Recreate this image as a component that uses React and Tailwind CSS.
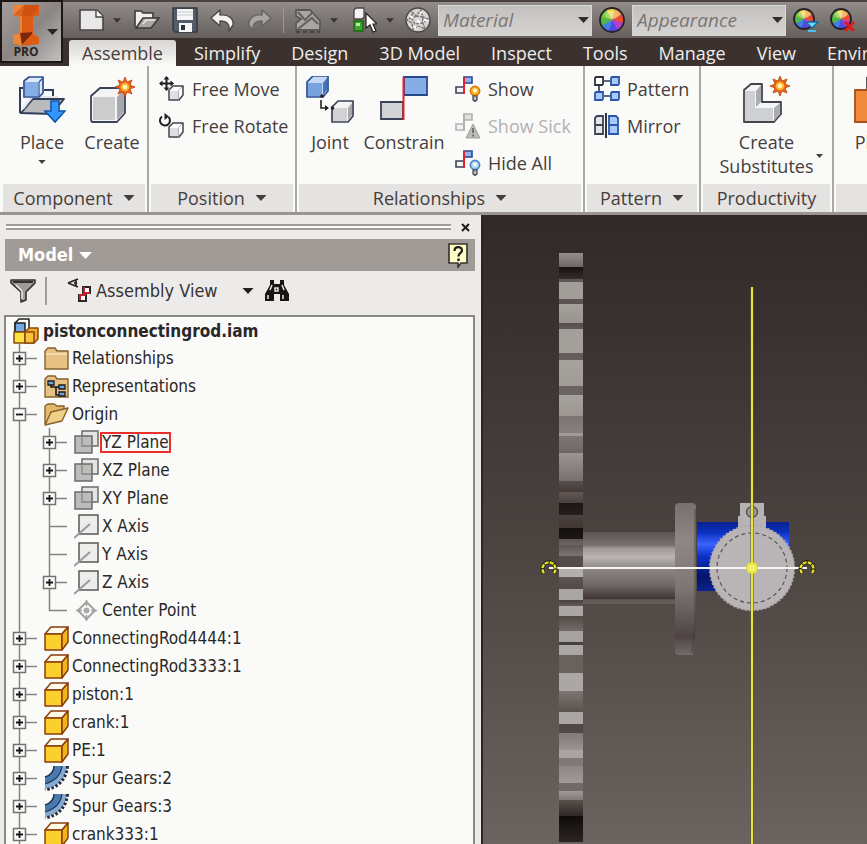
import { useState } from "react";

const TABS = ["Assemble", "Simplify", "Design", "3D Model", "Inspect", "Tools", "Manage", "View", "Environments"];

const TREE = [
    { id: "rel", label: "Relationships", icon: "folder", expandable: true },
    { id: "rep", label: "Representations", icon: "views", expandable: true },
    {
        id: "origin",
        label: "Origin",
        icon: "open",
        expandable: true,
        children: [
            { id: "yz", label: "YZ Plane", icon: "plane", expandable: true },
            { id: "xz", label: "XZ Plane", icon: "plane", expandable: true },
            { id: "xy", label: "XY Plane", icon: "plane", expandable: true },
            { id: "x", label: "X Axis", icon: "axis" },
            { id: "y", label: "Y Axis", icon: "axis" },
            { id: "z", label: "Z Axis", icon: "axis", expandable: true },
            { id: "center", label: "Center Point", icon: "point" },
        ],
    },
    { id: "rod4", label: "ConnectingRod4444:1", icon: "part", expandable: true },
    { id: "rod3", label: "ConnectingRod3333:1", icon: "part", expandable: true },
    { id: "piston", label: "piston:1", icon: "part", expandable: true },
    { id: "crank", label: "crank:1", icon: "part", expandable: true },
    { id: "pe", label: "PE:1", icon: "part", expandable: true },
    { id: "gear2", label: "Spur Gears:2", icon: "gear", expandable: true },
    { id: "gear3", label: "Spur Gears:3", icon: "gear", expandable: true },
    { id: "crank333", label: "crank333:1", icon: "part", expandable: true },
];

// [top, bottom, colour at the top, colour at the bottom]
const GEAR_BANDS = [
    [253, 267, "#958d8b", "#6f6765"],
    [267, 279, "#15100f", "#352e2c"],
    [279, 282, "#5f5856", "#5f5856"],
    [282, 299, "#a19d99", "#a19d99"],
    [299, 304, "#5c5553", "#5c5553"],
    [304, 323, "#a5a19d", "#98938f"],
    [323, 329, "#544d4b", "#605957"],
    [329, 353, "#a39f9b", "#a39f9b"],
    [353, 360, "#645d5b", "#645d5b"],
    [360, 386, "#a5a19d", "#a19c98"],
    [386, 395, "#6a6361", "#6a6361"],
    [395, 416, "#a5a19d", "#9c9793"],
    [416, 433, "#7a7371", "#87807e"],
    [433, 436, "#a19c99", "#a19c99"],
    [436, 453, "#7d7674", "#6e6765"],
    [453, 481, "#9c9593", "#77706e"],
    [481, 492, "#564d4a", "#443b39"],
    [492, 503, "#615856", "#4b423f"],
    [503, 515, "#1b1513", "#251e1c"],
    [515, 528, "#4b423f", "#403735"],
    [528, 539, "#14100e", "#1c1715"],
    [539, 545, "#5d5654", "#6b6462"],
    [545, 556, "#5c5553", "#7c7573"],
    [556, 569, "#564e4b", "#514946"],
    [569, 577, "#b2afac", "#b2afac"],
    [577, 589, "#5c5552", "#524a47"],
    [589, 600, "#a9a6a3", "#a9a6a3"],
    [600, 606, "#48413e", "#625a57"],
    [606, 616, "#aaa7a4", "#aaa7a4"],
    [616, 631, "#524a47", "#726b68"],
    [631, 642, "#a5a29f", "#a5a29f"],
    [642, 645, "#45403d", "#45403d"],
    [645, 655, "#aaa7a4", "#aaa7a4"],
    [655, 673, "#68615e", "#68615e"],
    [673, 691, "#aaa7a4", "#aaa7a4"],
    [691, 712, "#7d7673", "#58514e"],
    [712, 724, "#a9a6a3", "#a9a6a3"],
    [724, 733, "#4f4845", "#504946"],
    [733, 750, "#807977", "#9b9492"],
    [750, 758, "#aaa5a2", "#aaa5a2"],
    [758, 766, "#7f7876", "#7f7876"],
    [766, 783, "#8e8785", "#a09997"],
    [783, 791, "#716a68", "#716a68"],
    [791, 800, "#a09997", "#7f7876"],
    [800, 816, "#57504d", "#2e2725"],
    [816, 842, "#0e0b0a", "#2b2523"],
];

const Arrow = ({ className = "h-[6px] w-[11px]" }) => (
    <svg className={className} viewBox="0 0 11 6" aria-hidden="true">
        <path d="M0 0h11L5.5 6z" fill="currentColor" />
    </svg>
);

const Burst = ({ x, y }) => (
    <g transform={`translate(${x} ${y})`}>
        <path
            d="M0-10 2-5 7-7 5-2 10 0 5 2 7 7 2 5 0 10-2 5-7 7-5 2-10 0-5-2-7-7-2-5z"
            fill="#e8641b"
            stroke="#b9460c"
            strokeWidth=".8"
        />
        <circle r="4.3" fill="#ffb733" />
        <circle r="2.3" fill="#fff6b8" />
    </g>
);

const SmallCube = ({ x = 0, y = 0 }) => (
    <g transform={`translate(${x} ${y})`} stroke="#3e424c" strokeWidth="1.5" strokeLinejoin="round">
        <path d="M1 5 5 1h10v9l-4 5H1z" fill="#fff" />
        <path d="M2 6h8v8H2z" fill="#dedfe2" stroke="none" />
        <path d="M10.500 5.500v9M10.500 5.500 14 2" stroke="#aeb1b8" strokeWidth="1" />
    </g>
);

/* ---------- quick access icons ---------- */

const Wheel = ({ r = 11, cx = 13, cy = 13 }) => {
    const colors = ["#f39a3c", "#ee4a33", "#b13fd0", "#5148e8", "#3f80ea", "#4fb84a", "#7acb3b", "#f0d83f"];
    return (
        <g transform={`translate(${cx} ${cy})`}>
            {colors.map((color, i) => {
                const a = ((i * 45 - 75) * Math.PI) / 180;
                const b = ((i * 45 - 30) * Math.PI) / 180;
                const d = `M0 0 ${r * Math.cos(a)} ${r * Math.sin(a)}A${r} ${r} 0 0 1 ${r * Math.cos(b)} ${r * Math.sin(b)}z`;
                return <path key={color} d={d} fill={color} />;
            })}
            <circle r={r} fill="none" stroke="#26222c" strokeWidth="1.8" />
            <ellipse cy={-r * 0.45} rx={r * 0.6} ry={r * 0.35} fill="#fff" opacity=".3" />
        </g>
    );
};

const quickIcons = {
    new: (
        <>
            <path d="M2 3h17l6 6v14H2z" fill="#e9e8e8" stroke="#494544" strokeWidth="1.6" />
            <path d="M18 3v7h7" fill="#fff" stroke="#494544" strokeWidth="1.4" />
        </>
    ),
    folder: (
        <>
            <path d="M1 20V4h6l2 2h10v5" fill="#efefef" stroke="#3d3a39" strokeWidth="1.6" />
            <path d="M2 21 9 11h16l-8 10z" fill="#a9a8a7" stroke="#3d3a39" strokeWidth="1.6" />
            <path d="m9 17 3-4h9" fill="none" stroke="#e8e8e8" strokeWidth="1.6" />
        </>
    ),
    save: (
        <>
            <path d="M1 1h24v24H3l-2-2z" fill="#555c69" stroke="#343944" strokeWidth="1.5" />
            <path d="M5 2h16v11H5z" fill="#f6f6f6" />
            <path d="M5 5h16M5 8h16" stroke="#c9cbd0" />
            <path d="M7 16h13v9H7z" fill="#f6f6f6" />
            <path d="M9 18h4v5H9z" fill="#30343d" />
        </>
    ),
    undo: (
        <path
            d="m1 11 9-8v5c9-1 14 4 13 10l-4 6c1-7-2-10-9-10v5z"
            fill="#f3f3f3"
            stroke="#4c4846"
            strokeWidth="1.4"
            strokeLinejoin="round"
        />
    ),
    redo: (
        <path
            d="m23 11-9-8v5C5 7 0 12 1 18l4 6c-1-7 2-10 9-10v5z"
            fill="#a9a6a4"
            stroke="#686461"
            strokeWidth="1.4"
            strokeLinejoin="round"
        />
    ),
    update: (
        <>
            <path d="M1 3h14l10 11v9H1v-7l5-4-5-3z" fill="#aaa6a3" stroke="#5d5856" strokeWidth="1.8" />
            <path d="m3 5 7 8 7-7M3 22 17 11l6 6" fill="none" stroke="#66615f" strokeWidth="2.2" />
            <path d="M1 25h24" stroke="#4a4543" strokeWidth="2" strokeDasharray="4 3" />
        </>
    ),
    select: (
        <>
            <path d="M3 3 5 1h8v9l-2 2H3z" fill="#f3f3f3" stroke="#484544" strokeWidth="1.3" />
            <path d="M3 14h9v10H3z" fill="#39a62a" stroke="#1c6812" strokeWidth="1.5" />
            <path d="M5 16h4v3H5z" fill="#b9edaa" />
            <path d="M15 6v15l4-3 3 7 3-1-3-7h4z" fill="#fff" stroke="#25211f" strokeWidth="1.2" />
        </>
    ),
    sphere: (
        <>
            <circle cx="13" cy="13" r="12" fill="#d6d5d5" stroke="#4a4644" strokeWidth="1.4" />
            <path
                d="m7 5 4 4 5-6 2 7 5 2-5 4 2 6-7-3-5 4-1-7-5-3 5-3zM11 9l7 1-1 6-7 1-3-5z"
                fill="none"
                stroke="#77716f"
                strokeWidth="1.3"
                strokeDasharray="3 1"
            />
            <path d="m5 9 3 2m7-5 3-1m-6 8 3 3m4-3 4 1M9 19l2 3" stroke="#fff" strokeWidth="1.8" />
        </>
    ),
    wheel: <Wheel r={12} />,
    wheelAdjust: (
        <>
            <Wheel r={10} cx={11} cy={12} />
            <path d="M13 15h12l-6 6z" fill="#6ed5ff" stroke="#106f9e" strokeWidth="1.3" />
            <path d="M15 24h8" stroke="#45bff0" strokeWidth="2" />
        </>
    ),
    wheelClear: (
        <>
            <Wheel r={10} cx={11} cy={12} />
            <path d="m15 15 9 9m0-9-9 9" stroke="#d81c17" strokeWidth="3" />
        </>
    ),
};

const QuickButton = ({ name, label, className = "" }) => (
    <button aria-label={label} className={`shrink-0 ${className}`}>
        <svg className="size-[26px]" viewBox="0 0 26 26">
            {quickIcons[name]}
        </svg>
    </button>
);

const ArrowButton = ({ label }) => (
    <button aria-label={label} className="-ml-1 flex w-[10px] shrink-0 justify-center text-[#3a3431]">
        <Arrow className="h-[5px] w-[8px]" />
    </button>
);

const StyleSelect = ({ label }) => (
    <div className="relative h-[31px] w-[154px] shrink-0">
        <select
            aria-label={label}
            className="h-full w-full appearance-none border border-[#dad8d6] bg-linear-to-b from-[#c3c1bf] to-[#d6d4d2] pl-1 text-[19px] leading-6 text-[#7b7674] italic"
        >
            <option>{label}</option>
        </select>
        <span className="pointer-events-none absolute top-[12px] right-[3px] text-[#322c2a]">
            <Arrow />
        </span>
    </div>
);

const TitleBar = () => (
    <div className="flex h-[38px] items-center overflow-hidden border-t-2 border-[#4a4340] bg-linear-to-b from-[#928c8a] to-[#655f5c] pl-[15px]">
        <div className="flex shrink-0 items-center gap-3">
            <QuickButton name="new" label="New" />
            <ArrowButton label="New options" />
            <QuickButton name="folder" label="Open" />
            <QuickButton name="save" label="Save" />
            <QuickButton name="undo" label="Undo" />
            <QuickButton name="redo" label="Redo" />
        </div>
        <div className="ml-[9px] flex shrink-0 items-center gap-3 border-l border-[#9d9896] pl-[11px]">
            <QuickButton name="update" label="Update" />
            <ArrowButton label="Update options" />
            <QuickButton name="select" label="Select" />
            <ArrowButton label="Select options" />
        </div>
        <div className="ml-[10px] flex shrink-0 items-center gap-[7px]">
            <QuickButton name="sphere" label="Material browser" />
            <StyleSelect label="Material" />
            <QuickButton name="wheel" label="Appearance browser" />
            <StyleSelect label="Appearance" />
            <QuickButton name="wheelAdjust" label="Adjust appearance" />
            <QuickButton name="wheelClear" label="Clear appearance" className="ml-1" />
        </div>
    </div>
);

const AppButton = () => (
    <button
        aria-label="Application menu"
        className="flex h-[63px] w-[63px] shrink-0 items-center justify-between border-2 border-[#1c1715] bg-linear-to-br from-[#a29d9a] via-[#8b8683] to-[#c2bfbc] pr-[3px] pl-[10px] text-[#2b2523]"
    >
        <span className="flex flex-col items-center">
            <svg className="h-[41px] w-[28px]" viewBox="0 0 28 41" aria-hidden="true">
                <path d="M1 0h26v10l-6 2v17l6 3v7l-17 2-9-3v-8l7-2V12l-7-2z" fill="#dc5c15" />
                <path d="M1 0h11l-2 12v16l10-1v2L10 41l-9-3v-8l7-2V12l-7-2z" fill="#f08434" />
                <path d="M1 10 12 0h15l-7 11H8z" fill="#c9480c" opacity=".55" />
                <path d="m8 28 12-1v2l-10 11z" fill="#7e2606" />
            </svg>
            <span className="text-[12px] leading-3 font-bold">PRO</span>
        </span>
        <Arrow className="h-[6px] w-[11px]" />
    </button>
);

/* ---------- ribbon icons ---------- */

const PlaceIcon = () => (
    <svg className="h-[48px] w-[48px]" viewBox="0 0 48 48" aria-hidden="true">
        <path d="M1 35V11h32v5" fill="#f6f7f9" />
        <path d="M2 37V12h3M26 14h9v7M2 37h28" fill="none" stroke="#2f3d5b" strokeWidth="2" />
        <path d="M3 37 15 23h31L34 38z" fill="#b9babd" stroke="#2f3d5b" strokeWidth="1.8" strokeLinejoin="round" />
        <path d="m5 33 9-12h26" fill="none" stroke="#dfe3ea" strokeWidth="2" />
        <path d="m6 5 5-4h14v16l-4 4H6z" fill="#dbe9fb" stroke="#2b4f94" strokeWidth="1.7" strokeLinejoin="round" />
        <path d="M7 6h13v14H7z" fill="#85aee8" />
        <path d="M21 6v14M21 6l4-4" stroke="#2b4f94" strokeWidth="1.2" />
        <path d="M33 25h8v10h6L37 46 27 35h6z" fill="#3296ff" stroke="#1455a8" strokeWidth="1.6" />
    </svg>
);

const CreateIcon = () => (
    <svg className="h-[48px] w-[48px]" viewBox="0 0 48 48" aria-hidden="true">
        <path
            d="m3 20 9-8h25v25l-8 9H4l-1-2z"
            fill="#f5f5f6"
            stroke="#3a4257"
            strokeWidth="1.8"
            strokeLinejoin="round"
        />
        <path d="M5 21h22v23H5z" fill="#cccccd" />
        <path d="M29 21v23l7-8V14z" fill="#a7a8ab" />
        <Burst x={37} y={11} />
    </svg>
);

const JointIcon = () => (
    <svg className="h-[48px] w-[48px]" viewBox="0 0 48 48" aria-hidden="true">
        <path d="m1 6 6-6h15v15l-5 6H1z" fill="#c4d9f6" stroke="#2b4f94" strokeWidth="1.7" strokeLinejoin="round" />
        <path d="M2 7h14v13H2z" fill="#78a3e0" />
        <path d="m17 7 4-5v12l-4 5z" fill="#4673b8" />
        <circle cx="16" cy="20" r="1.800" fill="#222" />
        <path d="M15 24v8h6" fill="none" stroke="#222" strokeWidth="1.6" />
        <path d="m19 29 4 3-4 3z" fill="#222" />
        <path
            d="m26 31 6-6h15v15l-5 6H26z"
            fill="#f4f4f5"
            stroke="#3a4257"
            strokeWidth="1.7"
            strokeLinejoin="round"
        />
        <path d="M27 32h14v13H27z" fill="#d2d2d4" />
        <path d="m42 32 4-5v12l-4 5z" fill="#a7a8ab" />
        <circle cx="26.500" cy="32" r="1.800" fill="#222" />
    </svg>
);

const ConstrainIcon = () => (
    <svg className="h-[48px] w-[48px]" viewBox="0 0 48 48" aria-hidden="true">
        <path d="M24 1h23v18H24z" fill="#86aee6" stroke="#29478c" strokeWidth="1.8" />
        <path d="M1 26h22v17H1z" fill="#d2d3d5" stroke="#3a4257" strokeWidth="1.8" />
        <path d="M23.500 1v43" stroke="#e4212c" strokeWidth="2" />
    </svg>
);

const SubstituteIcon = () => (
    <svg className="h-[48px] w-[48px]" viewBox="0 0 48 48" aria-hidden="true">
        <path
            d="m1 14 7-6h11v18h19v12l-7 8H1z"
            fill="#f4f5f7"
            stroke="#43464d"
            strokeWidth="1.8"
            strokeLinejoin="round"
        />
        <path d="M2 15h10v17h18v13H2z" fill="#cfd0d4" />
        <path d="m13 15 5-6v17l-5 5z" fill="#aaacb2" />
        <path d="m31 32 6-5v11l-6 7z" fill="#aaacb2" />
        <Burst x={37} y={10} />
    </svg>
);

const FreeMoveIcon = () => (
    <svg className="size-[26px]" viewBox="0 0 26 26" aria-hidden="true">
        <path d="M7.500 1v13M1 7.500h13" stroke="#222" strokeWidth="2" />
        <path d="m7.500 0 3 3.500h-6zM7.500 15l3-3.500h-6zM0 7.500l3.500-3v6zM15 7.500l-3.500-3v6z" fill="#222" />
        <SmallCube x={9} y={9} />
    </svg>
);

const FreeRotateIcon = () => (
    <svg className="size-[26px]" viewBox="0 0 26 26" aria-hidden="true">
        <path d="M3 3.500A5 5 0 1 0 9.500 4" fill="none" stroke="#222" strokeWidth="2" />
        <path d="M5.500 0v7l4.500-3.500z" fill="#222" />
        <SmallCube x={9} y={9} />
    </svg>
);

const ShowIcon = ({ kind }) => {
    const sick = kind === "sick";
    const bulb = kind === "show" ? "#ffb52e" : "#a8d5ff";
    const bulbEdge = kind === "show" ? "#d67a00" : "#4983c4";
    return (
        <svg className="size-[26px]" viewBox="0 0 26 26" aria-hidden="true">
            <path d="M9 1h8v6H9z" fill={sick ? "#e1e0df" : "#8cb4ef"} stroke={sick ? "#b5b3b1" : "#29478c"} strokeWidth="1.6" />
            <path d="M1 11h8v6H1z" fill="#f2f2f2" stroke={sick ? "#b5b3b1" : "#3a4257"} strokeWidth="1.6" />
            <path d="M9 1v17" stroke={sick ? "#b5b3b1" : "#e4212c"} strokeWidth="2" />
            {sick ? (
                <>
                    <path d="m18 11 7 14H11z" fill="#bdbbb9" stroke="#a3a19f" strokeLinejoin="round" />
                    <path d="M18 15v5m0 1.500v2" stroke="#77736f" strokeWidth="2" />
                </>
            ) : (
                <>
                    <circle cx="20" cy="15" r="4.600" fill={bulb} stroke={bulbEdge} strokeWidth="1.6" />
                    <circle cx="20" cy="14.500" r="2" fill="#fffbe0" />
                    <path d="M18 20h4v4l-2 1.500-2-1.500z" fill="#b9bcc4" stroke="#3a3d46" strokeWidth="1.2" />
                </>
            )}
        </svg>
    );
};

const PatternIcon = () => (
    <svg className="size-[26px]" viewBox="0 0 26 26" aria-hidden="true">
        <path d="M10 5h6M5 10v6M10 20h6" stroke="#29384f" strokeWidth="1.6" />
        <path d="m1 2 1-1h7v7L8 9H1z" fill="#fff" stroke="#2d3340" strokeWidth="1.8" />
        <path d="m17 2 1-1h7v7l-1 1h-7zM1 17l1-1h7v7l-1 1H1zM17 17l1-1h7v7l-1 1h-7z" fill="#a9c9f8" stroke="#2b55ac" strokeWidth="1.8" />
    </svg>
);

const MirrorIcon = () => (
    <svg className="size-[26px]" viewBox="0 0 26 26" aria-hidden="true">
        <path d="m1 5 2-2h6v9H1zM1 12h8v9H1z" fill="#e5e6e8" stroke="#3a4257" strokeWidth="1.8" />
        <path d="M15 3h7l2 2v7h-9zM15 12h9v9h-9z" fill="#a9c9f8" stroke="#2b55ac" strokeWidth="1.8" />
        <path d="M12 0v25" stroke="#2d3340" strokeWidth="2" />
    </svg>
);

/* ---------- ribbon ---------- */

const Panel = ({ title, arrow, className, children }) => (
    <section className={`flex shrink-0 flex-col border-r-2 border-[#aca8a5] ${className}`}>
        <div className="flex h-[118px]">{children}</div>
        <h2 className="mx-[2px] flex h-[28px] items-center justify-center gap-[10px] bg-[#e5e3e1] text-[18px] leading-6 text-[#453e3c]">
            {title}
            {arrow && <Arrow className="h-[6px] w-[12px]" />}
        </h2>
    </section>
);

const BigButton = ({ icon, label, className, children }) => (
    <button className={`flex flex-col items-center gap-[6px] pt-[10px] text-[18px] leading-6 ${className}`}>
        {icon}
        <span>{label}</span>
        {children}
    </button>
);

const SmallButton = ({ icon, label, disabled }) => (
    <button disabled={disabled} className="flex h-[37px] items-center gap-[7px] text-[18px] leading-6 disabled:text-[#b3b0ae]">
        {icon}
        {label}
    </button>
);

const Ribbon = () => (
    <div className="flex shrink-0 overflow-hidden border-b-3 border-[#9a9592] bg-[#fafaf9] text-[#453e3c]">
        <Panel title="Component" arrow className="w-[149px] pl-px">
            <BigButton icon={<PlaceIcon />} label="Place" className="ml-[6px] w-[70px]">
                <Arrow className="h-[4px] w-[8px]" />
            </BigButton>
            <BigButton icon={<CreateIcon />} label="Create" className="w-[70px]" />
        </Panel>
        <Panel title="Position" arrow className="w-[148px]">
            <div className="pt-1 pl-[10px]">
                <SmallButton icon={<FreeMoveIcon />} label="Free Move" />
                <SmallButton icon={<FreeRotateIcon />} label="Free Rotate" />
            </div>
        </Panel>
        <Panel title="Relationships" arrow className="w-[288px]">
            <BigButton icon={<JointIcon />} label="Joint" className="w-[66px]" />
            <BigButton icon={<ConstrainIcon />} label="Constrain" className="w-[82px]" />
            <div className="pt-1 pl-[10px]">
                <SmallButton icon={<ShowIcon kind="show" />} label="Show" />
                <SmallButton icon={<ShowIcon kind="sick" />} label="Show Sick" disabled />
                <SmallButton icon={<ShowIcon kind="hide" />} label="Hide All" />
            </div>
        </Panel>
        <Panel title="Pattern" arrow className="w-[116px]">
            <div className="pt-1 pl-[9px]">
                <SmallButton icon={<PatternIcon />} label="Pattern" />
                <SmallButton icon={<MirrorIcon />} label="Mirror" />
            </div>
        </Panel>
        <Panel title="Productivity" className="w-[133px]">
            <button className="relative flex w-full flex-col items-center gap-[6px] pt-[10px] text-[18px] leading-6">
                <SubstituteIcon />
                <span>
                    Create
                    <br />
                    Substitutes
                </span>
                <span className="absolute right-[9px] bottom-[26px]">
                    <Arrow className="h-[4px] w-[7px]" />
                </span>
            </button>
        </Panel>
        <Panel title="" className="w-[150px]">
            <BigButton
                label="Plane"
                className="ml-[14px] w-[60px]"
                icon={
                    <svg className="h-[48px] w-[48px]" viewBox="0 0 48 48" aria-hidden="true">
                        <path d="M13 1v12" stroke="#555" strokeWidth="2" />
                        <path d="M1 14h44v32H1z" fill="#f28a3c" stroke="#a8501b" strokeWidth="1.8" />
                    </svg>
                }
            />
        </Panel>
    </div>
);

/* ---------- model browser ---------- */

const treeIcons = {
    folder: (
        <>
            <path d="M1 5 4 2h7l2 3h11v18H1z" fill="#e6c184" stroke="#86612e" strokeWidth="1.4" />
            <path d="M2 8h21" stroke="#f7e2b8" strokeWidth="1.5" />
        </>
    ),
    views: (
        <>
            <path d="M1 5 4 2h7l2 3h11v18H1z" fill="#e6c184" stroke="#86612e" strokeWidth="1.4" />
            <path d="M7 10v3h5v8h4M12 13h4" fill="none" stroke="#1b1b1b" strokeWidth="1.6" />
            <path d="M4 7h6v4H4zM15 11h6v4h-6zM15 18h6v4h-6z" fill="#6fa6dc" stroke="#1b1b1b" strokeWidth="1.3" />
        </>
    ),
    open: (
        <>
            <path d="M1 22V4l3-2h6l3 2h7v5" fill="#e3b969" stroke="#86612e" strokeWidth="1.4" />
            <path d="m1 23 6-13 17-4-6 13z" fill="#f0cf86" stroke="#86612e" strokeWidth="1.4" strokeLinejoin="round" />
        </>
    ),
    plane: (
        <>
            <path d="M8 1h16v15H8z" fill="#e4e4e3" stroke="#6c6a69" strokeWidth="1.5" />
            <path d="M1 6h17v17H1z" fill="#bdbcbb" stroke="#6c6a69" strokeWidth="1.5" />
            <path d="M8 6v10h10" fill="none" stroke="#878584" strokeWidth="1.3" />
        </>
    ),
    axis: (
        <>
            <path d="M5 1h19v19H5z" fill="#ededec" stroke="#5a5857" strokeWidth="1.5" />
            <path d="m0 24 16-14" stroke="#9b9998" strokeWidth="2" />
        </>
    ),
    point: (
        <g fill="none" stroke="#a3a19f">
            <path d="M12.500 4 21 12.500 12.500 21 4 12.500z" strokeWidth="2" />
            <path d="M12.500 2v6m0 9v6M2 12.500h6m9 0h6" strokeWidth="1.5" />
            <circle cx="12.500" cy="12.500" r="2.500" fill="#aeacab" />
        </g>
    ),
    part: (
        <g stroke="#8a3d0c" strokeWidth="1.500" strokeLinejoin="round">
            <path d="m1 8 6-7h17l-6 7z" fill="#fffbe9" />
            <path d="M1 8h17v16H1z" fill="#fad02c" />
            <path d="m18 8 6-7v15l-6 8z" fill="#f1b51c" />
        </g>
    ),
    gear: (
        <>
            <path d="M10 0h13C22 12 14 21 1 23V11C7 9 10 5 10 0z" fill="#86abd3" />
            <path d="M10 0h8C17 9 11 15 1 18v-7C7 9 10 5 10 0z" fill="#477ab2" />
            <path d="M10 0C10 5 7 9 1 11" fill="none" stroke="#22334a" strokeWidth="1.500" />
            <path d="M18 0C17 9 11 15 1 18" fill="none" stroke="#263b57" strokeWidth="1.300" />
            <path d="M23.500 0C22.500 13 14 22 1 24" fill="none" stroke="#262d38" strokeWidth="3" strokeDasharray="2.600 1.800" />
        </>
    ),
};

// The guide lines of one row, with its plus or minus box
const Branch = ({ node, open, last, onToggle }) => {
    const lines = (
        <svg className="h-[28px] w-[38px]" viewBox="0 0 38 28" aria-hidden="true">
            <path d={last ? "M13.500 0v14.500H31" : "M13.500 0v28M13.500 14.500H31"} fill="none" stroke="#858281" strokeWidth="1.500" />
            {node.expandable && (
                <>
                    <path d="M7.500 8.500h12v12h-12z" fill="#fafaf9" stroke="#757271" strokeWidth="1.500" />
                    <path d={open ? "M10 14.500h7" : "M10 14.500h7M13.500 11v7"} stroke="#161616" strokeWidth="1.800" />
                </>
            )}
        </svg>
    );
    if (!node.expandable) return lines;
    return (
        <button aria-label={`Toggle ${node.label}`} aria-expanded={open} onClick={onToggle}>
            {lines}
        </button>
    );
};

const TreeRow = ({ node, level = 0, last, open, onToggle, selected, onSelect }) => (
    <li className="flex h-[28px] items-center">
        {level > 0 && (
            <span className="flex h-full w-[30px] shrink-0">
                <svg className="h-[28px] w-[30px]" viewBox="0 0 30 28" aria-hidden="true">
                    <path d="M13.500 0v28" stroke="#858281" strokeWidth="1.500" />
                </svg>
            </span>
        )}
        <Branch node={node} open={open} last={last} onToggle={onToggle} />
        <svg className="size-[25px] shrink-0" viewBox="0 0 25 25" aria-hidden="true">
            {treeIcons[node.icon]}
        </svg>
        <button
            onClick={onSelect}
            className={`ml-px border-2 leading-[17px] whitespace-nowrap ${selected ? "border-[#e8312c]" : "border-transparent"}`}
        >
            {node.label}
        </button>
    </li>
);

const ModelTree = () => {
    const [expanded, setExpanded] = useState({ origin: true });
    const [selected, setSelected] = useState("yz");

    const toggle = (id) => setExpanded((prev) => ({ ...prev, [id]: !prev[id] }));

    const rows = TREE.flatMap((node) => {
        const kids = (expanded[node.id] && node.children) || [];
        return [
            { node, level: 0 },
            ...kids.map((kid, i) => ({ node: kid, level: 1, last: i === kids.length - 1 })),
        ];
    });

    return (
        <div className="ml-1 min-h-0 flex-1 overflow-hidden border-t-2 border-r-2 border-l-2 border-[#8b8784] bg-[#fafaf9] text-[17px] text-[#2a2727]">
            <div className="flex h-[27px] items-center gap-1 pl-[7px]">
                <svg className="size-[26px] shrink-0" viewBox="0 0 26 26" aria-hidden="true">
                    <g stroke="#1d1d1d" strokeWidth="1.500" strokeLinejoin="round">
                        <path d="m2 5 4-4h10v10l-3 3H2z" fill="#fff" />
                        <path d="M2 5h10v9H2z" fill="#77a9e2" />
                    </g>
                    <g stroke="#8a4a0c" strokeWidth="1.500" strokeLinejoin="round">
                        <path d="M1 14h11v11H1z" fill="#fbe23c" />
                        <path d="m12 14 4-4h9v11l-4 4h-9z" fill="#f4a72b" />
                        <path d="M12 14h9v11h-9z" fill="#f8c33a" />
                    </g>
                </svg>
                <span className="leading-5 font-bold">pistonconnectingrod.iam</span>
            </div>
            <ul>
                {rows.map(({ node, level, last }) => (
                    <TreeRow
                        key={node.id}
                        node={node}
                        level={level}
                        last={last}
                        open={!!expanded[node.id]}
                        onToggle={() => toggle(node.id)}
                        selected={selected === node.id}
                        onSelect={() => setSelected(node.id)}
                    />
                ))}
            </ul>
        </div>
    );
};

const ModelBrowser = () => (
    <aside className="flex w-[481px] shrink-0 flex-col bg-[#edebe9] pr-[6px] font-['DejaVu_Sans_Condensed','Noto_Sans',sans-serif]">
        <div className="flex h-[24px] items-center gap-[5px] pr-px pl-[6px]">
            <div className="h-[6px] flex-1 border-y-2 border-[#a19d9a] bg-white" />
            <button aria-label="Close" className="flex w-[18px] justify-center">
                <svg className="size-[9px]" viewBox="0 0 9 9">
                    <path d="m1 1 7 7m0-7L1 8" stroke="#1d1918" strokeWidth="2" />
                </svg>
            </button>
        </div>
        <div className="ml-[5px] flex h-[32px] items-center justify-between bg-[#a09b97] pr-[6px] pl-[13px] text-white">
            <button className="flex items-center gap-[6px] text-[18px] leading-6 font-bold">
                Model
                <Arrow className="h-[7px] w-[13px]" />
            </button>
            <button aria-label="Help">
                <svg className="h-[25px] w-[22px]" viewBox="0 0 22 25">
                    <path d="M2 1h18v19h-6l-3 4v-4H2z" fill="#fffbc4" stroke="#3b3733" strokeWidth="1.700" />
                    <path d="M7.500 8c0-5 7.500-5 7.500-.5C15 10 11.500 10 11.500 13.500" fill="none" stroke="#1d1b1a" strokeWidth="2.200" />
                    <path d="M11.500 15.500V18" stroke="#1d1b1a" strokeWidth="2.400" />
                </svg>
            </button>
        </div>
        <div className="flex h-[44px] items-center pb-1 pl-[10px]">
            <button aria-label="Filter">
                <svg className="size-[26px]" viewBox="0 0 26 26">
                    <path d="M1 2h24v3l-9 9v8l-5 2v-10L1 5z" fill="#9e9c9b" stroke="#34302e" strokeWidth="1.600" strokeLinejoin="round" />
                    <path d="M3 4h20" stroke="#35302e" strokeWidth="2" />
                    <path d="m6 7 6 6v8" fill="none" stroke="#e8e7e6" strokeWidth="1.600" />
                </svg>
            </button>
            <span className="ml-[9px] h-[28px] w-[2px] bg-[#a19d9a]" />
            <svg className="ml-[20px] size-[26px]" viewBox="0 0 26 26" aria-hidden="true">
                <path d="M1 5 11 1M1 5l10 4M9 2v6" fill="none" stroke="#25211f" strokeWidth="1.500" />
                <circle cx="8.500" cy="5" r="1.500" fill="#25211f" />
                <path d="M16 9h7v6h-7zM12 17h7v6h-7z" fill="#fff" stroke="#2c2725" strokeWidth="2" />
                <path d="M17 9v6h6M13 22v-5h6" fill="none" stroke="#c32031" strokeWidth="2" />
            </svg>
            <div className="relative ml-[3px]">
                <select aria-label="Browser view" className="w-[158px] appearance-none text-[18px] leading-6 text-[#383332]">
                    <option>Assembly View</option>
                </select>
                <span className="pointer-events-none absolute top-[9px] right-0 text-[#25211f]">
                    <Arrow className="h-[6px] w-[12px]" />
                </span>
            </div>
            <button aria-label="Find" className="ml-[10px]">
                <svg className="size-[26px]" viewBox="0 0 26 26">
                    <path d="M6 2h4v4h6V2h4v5l5 9v7h-9v-7h-6v7H1v-7l5-9z" fill="#181413" />
                    <path d="M4 17v4m4-14-2 5M19 17v4m-1-14 2 5M11 10h3v3h-3z" stroke="#e9e7e5" strokeWidth="1.500" fill="none" />
                </svg>
            </button>
        </div>
        <ModelTree />
    </aside>
);

/* ---------- 3D view ---------- */

const Grip = ({ x }) => (
    <g transform={`translate(${x} 568)`} fill="none">
        <path d="M-5 5A6.500 6.500 0 1 1 5 5" stroke="#221d0c" strokeWidth="4" />
        <path d="M-5 5A6.500 6.500 0 1 1 5 5" stroke="#e6e32c" strokeWidth="2.400" strokeDasharray="4 1" />
    </g>
);

const Viewport = () => (
    <main className="min-w-0 flex-1 border-l-2 border-[#2b2422] bg-linear-to-b from-[#302927] via-[#4a423f] to-[#6a6360]">
        <svg className="h-full w-full" viewBox="483 215 384 629" preserveAspectRatio="xMinYMin slice" role="img" aria-label="Piston assembly">
            <defs>
                <linearGradient id="shaft" x2="0" y2="1">
                    <stop offset="0" stopColor="#5b5452" />
                    <stop offset=".18" stopColor="#77706e" />
                    <stop offset=".23" stopColor="#a09b99" />
                    <stop offset=".35" stopColor="#bab5b3" />
                    <stop offset=".5" stopColor="#8f8886" />
                    <stop offset=".75" stopColor="#6d6563" />
                    <stop offset=".93" stopColor="#3f3533" />
                    <stop offset=".94" stopColor="#5f5855" />
                    <stop offset="1" stopColor="#645d5a" />
                </linearGradient>
                <linearGradient id="flange" x2="0" y2="1">
                    <stop offset="0" stopColor="#77706e" />
                    <stop offset=".25" stopColor="#8e8785" />
                    <stop offset=".55" stopColor="#7e7775" />
                    <stop offset=".88" stopColor="#4f4443" />
                    <stop offset="1" stopColor="#746c6a" />
                </linearGradient>
                <linearGradient id="pin" x2="0" y2="1">
                    <stop offset="0" stopColor="#0a2390" />
                    <stop offset=".15" stopColor="#0b2fc0" />
                    <stop offset=".32" stopColor="#3a64ff" />
                    <stop offset=".5" stopColor="#0d31c8" />
                    <stop offset=".8" stopColor="#041468" />
                    <stop offset="1" stopColor="#0a2390" />
                </linearGradient>
                {GEAR_BANDS.map(([top, , from, to]) => (
                    <linearGradient key={top} id={`band${top}`} x2="0" y2="1">
                        <stop offset="0" stopColor={from} />
                        <stop offset="1" stopColor={to} />
                    </linearGradient>
                ))}
            </defs>
            {GEAR_BANDS.map(([top, bottom]) => (
                <rect key={top} x="559" y={top} width="24" height={bottom - top} fill={`url(#band${top})`} />
            ))}
            <rect x="583" y="532" width="93" height="72" fill="url(#shaft)" />
            <path d="M675 507q0-4 4-4h13q4 0 4 4v102q0 30-3 46h-14q-4 0-4-4z" fill="url(#flange)" />
            <path d="M695 509v100q0 28-3 44" fill="none" stroke="#3f3634" strokeWidth="1.500" opacity=".5" />
            <rect x="697" y="522" width="92" height="69" fill="url(#pin)" />
            <path d="M789 574v18h-12z" fill="#574f4c" />
            <path d="M740 503h24v13h2v14h-28v-14h2z" fill="#b7b2b3" />
            <circle cx="752" cy="568" r="42.500" fill="#b9b4b5" stroke="#aaa5a6" strokeWidth="1.500" strokeDasharray="2 2" />
            <circle cx="752" cy="568" r="35" fill="none" stroke="#5c5557" strokeWidth="1.200" strokeDasharray="4 3" />
            <circle cx="752" cy="512" r="5.500" fill="#9b9697" stroke="#4c4647" strokeWidth="1.200" />
            <path d="M549 568h258" stroke="#f6f6f4" strokeWidth="2" />
            <path d="M752 287v557" stroke="#5d5a16" strokeWidth="4" opacity=".5" />
            <path d="M752 287v557" stroke="#e6e43a" strokeWidth="2" />
            <circle cx="752" cy="568" r="5" fill="#f1ef72" stroke="#e6e32c" strokeWidth="2" />
            <Grip x={549} />
            <Grip x={807} />
        </svg>
    </main>
);

const App = () => {
    const [activeTab, setActiveTab] = useState("Assemble");

    return (
        <div className="flex h-screen flex-col overflow-hidden bg-[#edebe9] font-['Open_Sans','Noto_Sans',sans-serif]">
            <header className="flex shrink-0 bg-[#3b322f]">
                <AppButton />
                <div className="min-w-0 flex-1">
                    <TitleBar />
                    <nav className="flex h-[28px] items-end gap-[5px] overflow-hidden pl-[6px]">
                        {TABS.map((tab) => (
                            <button
                                key={tab}
                                onClick={() => setActiveTab(tab)}
                                className={`h-[26px] shrink-0 rounded-t-[3px] px-[13px] text-[18px] leading-6 ${
                                    tab === activeTab ? "bg-linear-to-b from-[#d8d5d3] to-[#fafaf9] text-[#453e3c]" : "text-[#efedec]"
                                }`}
                            >
                                {tab}
                            </button>
                        ))}
                    </nav>
                </div>
            </header>
            <Ribbon />
            <div className="flex min-h-0 flex-1">
                <ModelBrowser />
                <Viewport />
            </div>
        </div>
    );
};

export default App;
